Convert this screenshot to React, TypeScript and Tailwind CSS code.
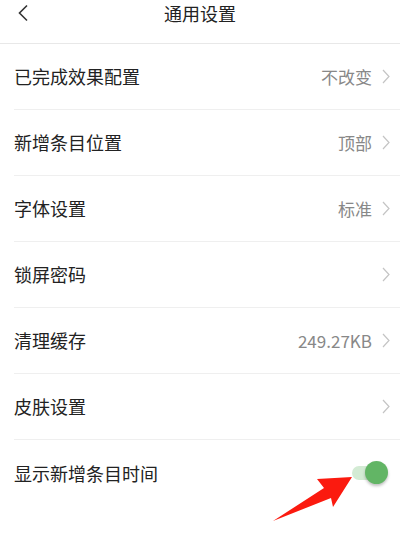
import React from "react";

const rows: { label: string; value?: string; chevron?: boolean; toggle?: boolean }[] = [
  { label: "已完成效果配置", value: "不改变", chevron: true },
  { label: "新增条目位置", value: "顶部", chevron: true },
  { label: "字体设置", value: "标准", chevron: true },
  { label: "锁屏密码", chevron: true },
  { label: "清理缓存", value: "249.27KB", chevron: true },
  { label: "皮肤设置", chevron: true },
  { label: "显示新增条目时间", toggle: true },
];

function Chevron() {
  return (
    <svg width="8" height="15" viewBox="0 0 8 15" className="ml-[10px]">
      <path d="M1 1 L7 7.5 L1 14" fill="none" stroke="#c4c4c4" strokeWidth="1.2" />
    </svg>
  );
}

export default function App() {
  return (
    <div
      className="relative w-[400px] h-[533px] bg-white overflow-hidden"
      style={{ fontFamily: '"Noto Sans CJK SC", "Noto Sans", sans-serif' }}
    >
      <div className="relative h-[44px] border-b border-[#e8e8e8] flex items-center justify-center">
        <svg width="12" height="18" viewBox="0 0 12 18" className="absolute left-[17px] top-[4px]">
          <path d="M10 1.5 L2.5 9 L10 16.5" fill="none" stroke="#333" strokeWidth="1.6" />
        </svg>
        <span className="text-[18px] text-[#222] -mt-[16px]">通用设置</span>
      </div>
      <div className="pl-[14px]">
        {rows.map((r, i) => (
          <div
            key={i}
            className={`h-[66px] flex items-center pr-[10px] ${i < rows.length - 1 ? "border-b border-[#efefef]" : ""}`}
          >
            <span className="text-[18px] text-[#222] flex-1">{r.label}</span>
            {r.value && <span className="text-[17px] text-[#888]">{r.value}</span>}
            {r.chevron && <Chevron />}
            {r.toggle && (
              <div className="relative w-[36px] h-[24px] mr-[2px]">
                <div className="absolute left-0 top-[5px] w-[30px] h-[14px] rounded-full bg-[#d3ebd4]" />
                <div className="absolute right-0 top-0 w-[23px] h-[23px] rounded-full bg-[#62b565] shadow-[0_2px_3px_rgba(0,0,0,0.25)]" />
              </div>
            )}
          </div>
        ))}
      </div>
      <svg className="absolute left-0 top-0" width="400" height="533" viewBox="0 0 400 533">
        <polygon
          points="352,477 317,479 324,488 273,521 331,498 333,507"
          fill="#fb1a0f"
        />
      </svg>
    </div>
  );
}
